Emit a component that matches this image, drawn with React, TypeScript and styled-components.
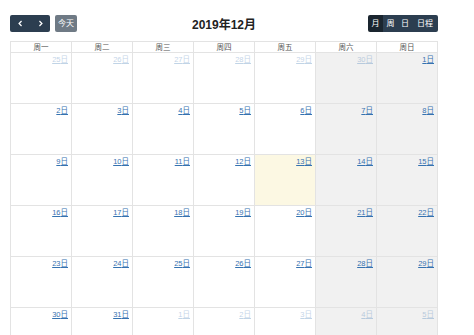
import React from "react";
import styled, { createGlobalStyle, css } from "styled-components";

const Global = createGlobalStyle`
  html, body { margin: 0; padding: 0; background: #fff; overflow: hidden; height: 335px; }
  body { font-family: "Liberation Sans", "Noto Sans CJK SC", sans-serif; }
`;

const Page = styled.div`
  padding: 14px 0 0 10px;
  width: 428px;
`;

const Toolbar = styled.div`
  display: flex;
  align-items: center;
  justify-content: space-between;
  height: 18px;
  margin-bottom: 9px;
`;

const Side = styled.div`
  display: flex;
  align-items: center;
  gap: 5px;
  width: 120px;
`;

const RightSide = styled(Side)`
  justify-content: flex-end;
`;

const Group = styled.div`
  display: flex;
  border-radius: 2px;
  overflow: hidden;
`;

const Btn = styled.button<{ $w: number; $active?: boolean; $disabled?: boolean }>`
  width: ${(p) => p.$w}px;
  height: 17px;
  padding: 0;
  border: none;
  display: flex;
  align-items: center;
  justify-content: center;
  color: #fff;
  background: ${(p) => (p.$active ? "#1a252f" : "#2c3e50")};
  font-family: "Noto Sans CJK SC", sans-serif;
  font-size: 8px;
  line-height: 1;
  ${(p) =>
    p.$disabled &&
    css`
      background: #6f7a85;
      border-radius: 2px;
    `}
`;

const Title = styled.h2`
  margin: 0;
  font-family: "Liberation Sans", "Noto Sans CJK SC", sans-serif;
  font-size: 12px;
  font-weight: bold;
  color: #222;
`;

const Grid = styled.div`
  display: grid;
  grid-template-columns: repeat(7, 1fr);
  border-left: 1px solid #e3e3e3;
  border-top: 1px solid #e3e3e3;
`;

const Head = styled.div`
  height: 10px;
  border-right: 1px solid #e3e3e3;
  border-bottom: 1px solid #e3e3e3;
  text-align: center;
  font-family: "Noto Sans CJK SC", sans-serif;
  font-size: 7.5px;
  line-height: 10px;
  color: #555;
`;

const Cell = styled.div<{ $bg: string }>`
  height: 50px;
  border-right: 1px solid #e3e3e3;
  border-bottom: 1px solid #e3e3e3;
  background: ${(p) => p.$bg};
  display: flex;
  justify-content: flex-end;
  align-items: flex-start;
`;

const DayNum = styled.a<{ $other?: boolean }>`
  margin: 2px 3px 0 0;
  font-family: "Liberation Sans", "Noto Sans CJK SC", sans-serif;
  font-size: 7.5px;
  line-height: 10px;
  color: #3572b0;
  text-decoration: underline;
  opacity: ${(p) => (p.$other ? 0.3 : 1)};
`;

const Chevron = ({ dir }: { dir: "l" | "r" }) => (
  <svg width="7" height="7" viewBox="0 0 10 10">
    <path
      d={dir === "l" ? "M6.5 1.5 L3 5 L6.5 8.5" : "M3.5 1.5 L7 5 L3.5 8.5"}
      fill="none"
      stroke="#fff"
      strokeWidth="1.8"
    />
  </svg>
);

const heads = ["周一", "周二", "周三", "周四", "周五", "周六", "周日"];

type Day = { n: number; other: boolean };
const days: Day[] = [];
[25, 26, 27, 28, 29, 30].forEach((n) => days.push({ n, other: true }));
for (let i = 1; i <= 31; i++) days.push({ n: i, other: false });
for (let i = 1; i <= 5; i++) days.push({ n: i, other: true });

export default function App() {
  return (
    <>
      <Global />
      <Page>
        <Toolbar>
          <Side>
            <Group>
              <Btn $w={20}>
                <Chevron dir="l" />
              </Btn>
              <Btn $w={20}>
                <Chevron dir="r" />
              </Btn>
            </Group>
            <Btn $w={22} $disabled>
              今天
            </Btn>
          </Side>
          <Title>2019年12月</Title>
          <RightSide>
            <Group>
              <Btn $w={15} $active>
                月
              </Btn>
              <Btn $w={15}>周</Btn>
              <Btn $w={14}>日</Btn>
              <Btn $w={26}>日程</Btn>
            </Group>
          </RightSide>
        </Toolbar>
        <Grid>
          {heads.map((h) => (
            <Head key={h}>{h}</Head>
          ))}
          {days.map((d, i) => {
            const col = i % 7;
            const today = !d.other && d.n === 13;
            const bg = today ? "#fcf8e3" : col >= 5 ? "#f1f1f1" : "#fff";
            return (
              <Cell key={i} $bg={bg}>
                <DayNum $other={d.other}>{d.n}日</DayNum>
              </Cell>
            );
          })}
        </Grid>
      </Page>
    </>
  );
}
